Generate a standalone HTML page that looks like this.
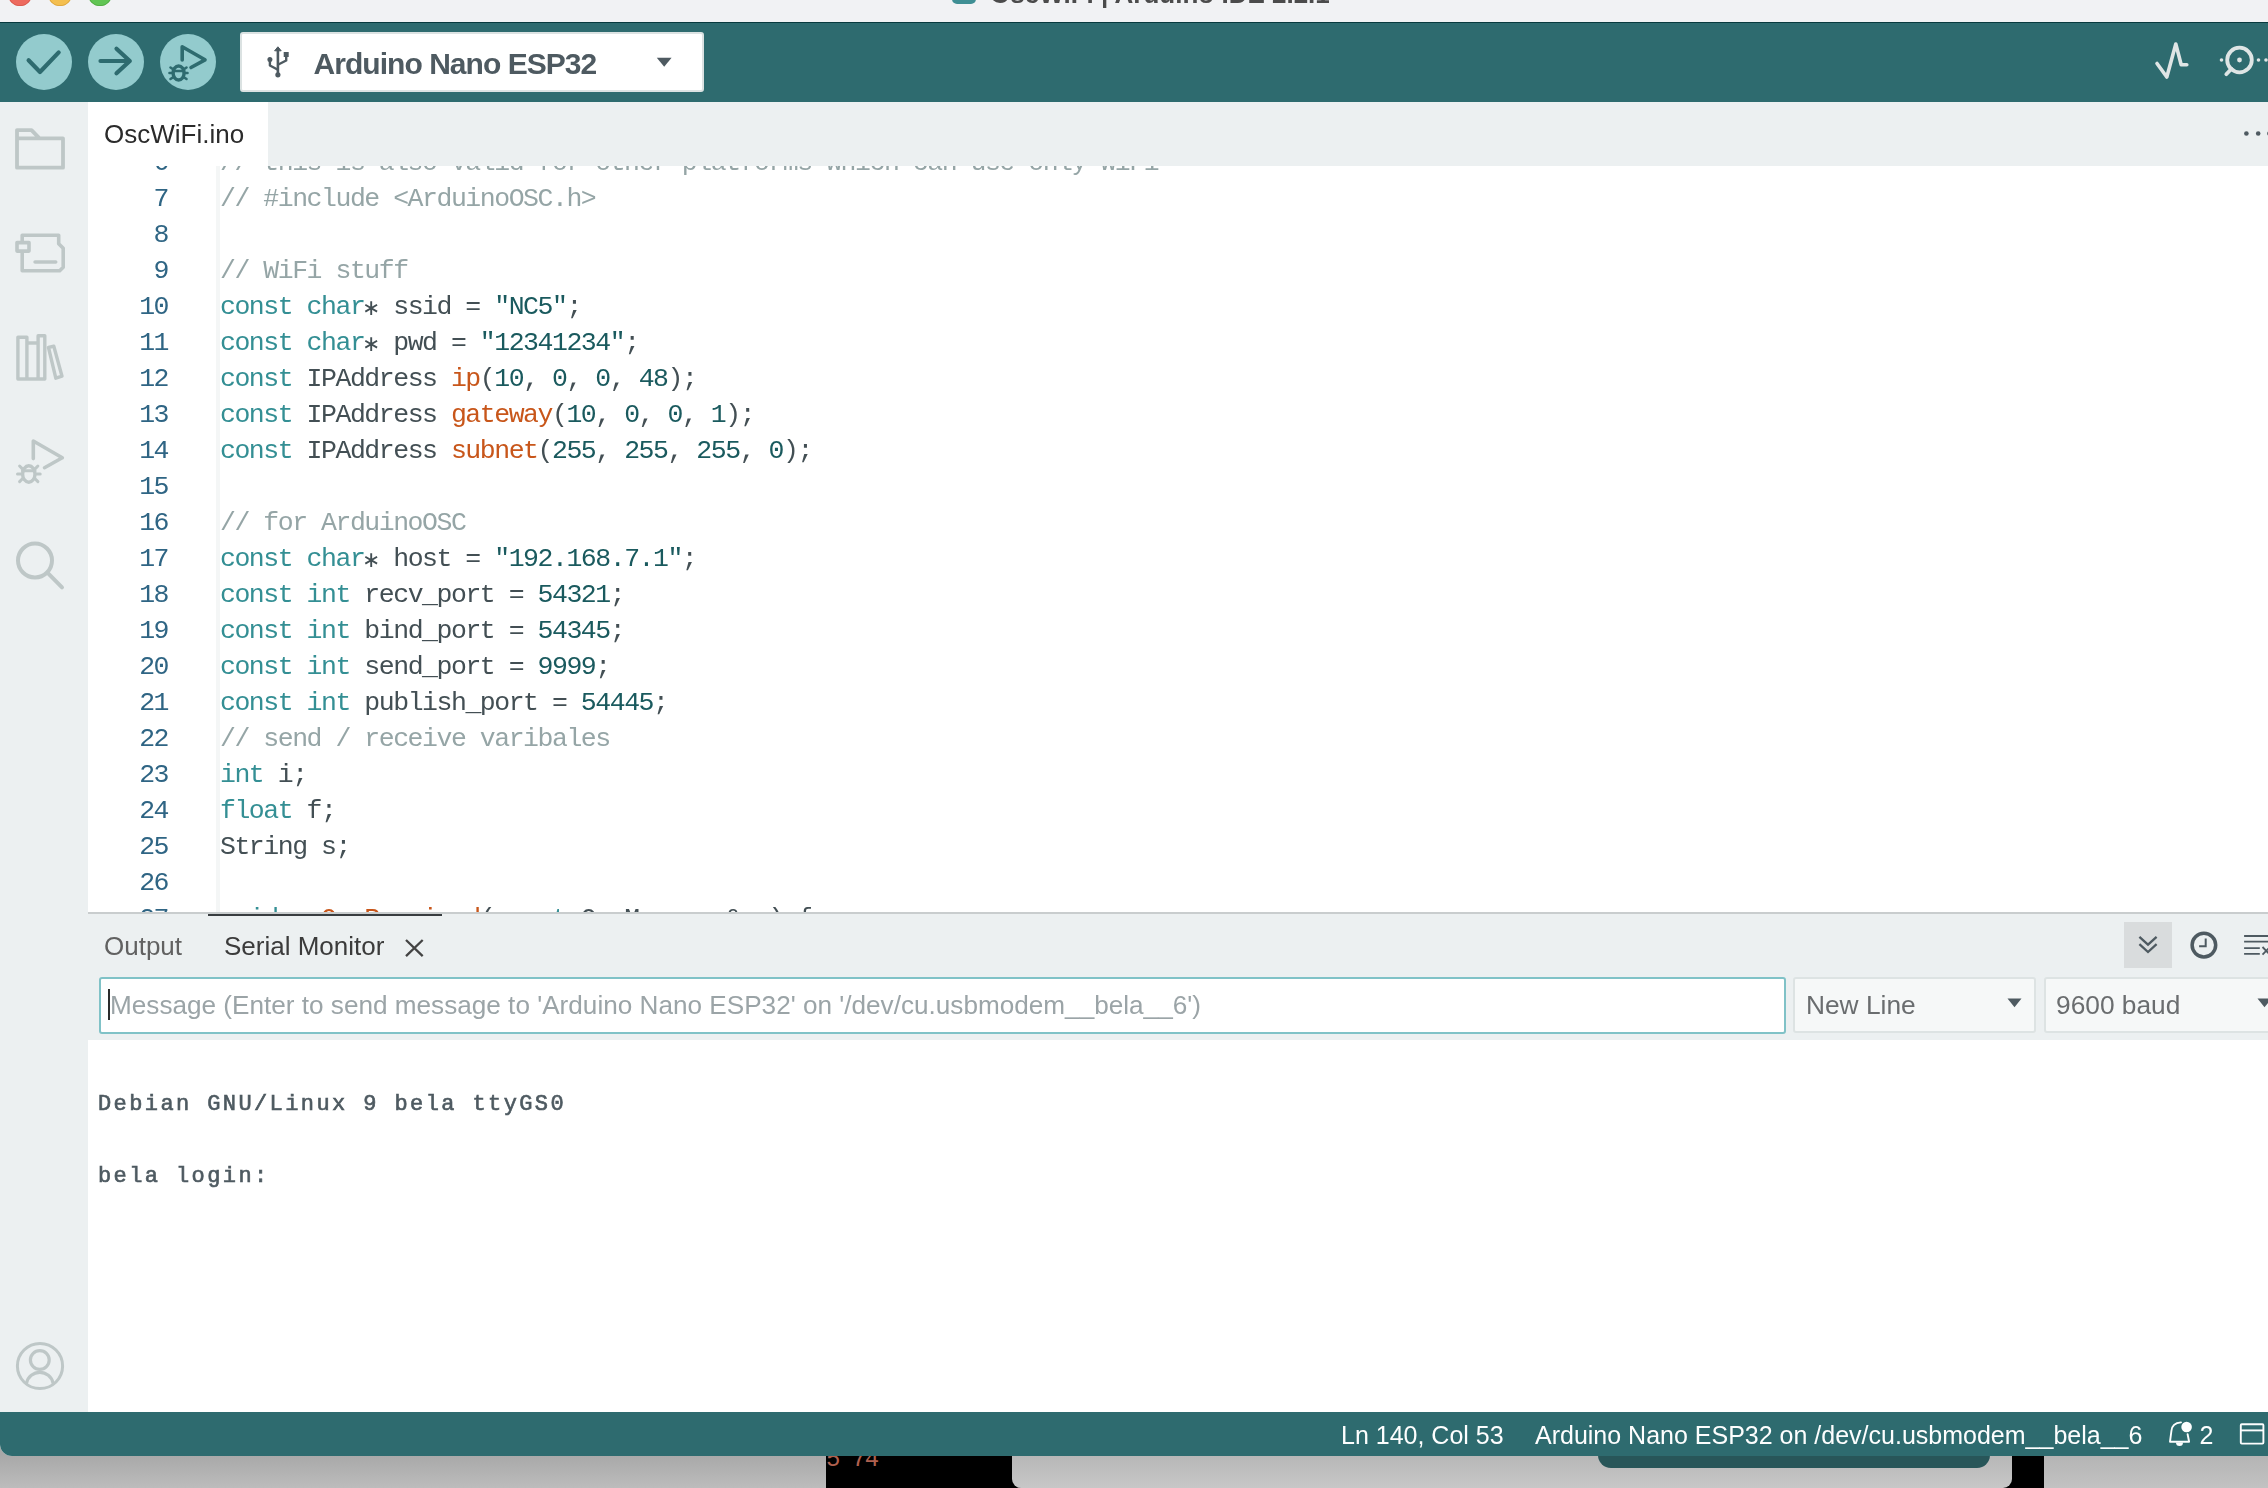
<!DOCTYPE html>
<html><head><meta charset="utf-8">
<style>
*{margin:0;padding:0;box-sizing:border-box}
html,body{width:2268px;height:1488px;overflow:hidden;background:#b4b4b4;font-family:"Liberation Sans",sans-serif}
.a{position:absolute}
#desk{left:0;top:1440px;width:2268px;height:48px;background:linear-gradient(#a8a8a8 30%,#bcbcbc)}
#win{will-change:transform;left:0;top:0;width:2268px;height:1456px;background:#fff;border-bottom-left-radius:12px;overflow:hidden}
#title{left:0;top:0;width:2268px;height:22px;background:#f1f2f4;overflow:hidden}
#tb{left:0;top:22px;width:2268px;height:80px;background:#2e6b6f;border-top:1.5px solid #083a3e}
#side{left:0;top:102px;width:88px;height:1310px;background:#ecf0f1}
#tabs{left:88px;top:102px;width:2180px;height:64px;background:#ecf0f1}
#editor{left:88px;top:166px;width:2180px;height:746px;background:#fff;overflow:hidden}
.code{font-family:"Liberation Mono",monospace;font-size:26.5px;line-height:36px;letter-spacing:-1.47px;white-space:pre}
.ln{position:absolute;left:0;width:80px;text-align:right;color:#2f6584}
.cl{position:absolute;left:132px;color:#434f54}
.ast{display:inline-block;width:14.43px;height:36px;vertical-align:top}.ast svg{display:block}.cm{color:#95a5a6}.kw{color:#348f94}.fn{color:#c8561a}.st{color:#1a5a5e}
#panel{left:88px;top:912px;width:2180px;height:500px;background:#fff}
.mono2{font-family:"Liberation Mono",monospace;font-size:22px;line-height:36px;letter-spacing:2.4px;white-space:pre;-webkit-text-stroke:0.65px #4e5a61}
#status{left:0;top:1412px;width:2268px;height:44px;background:#2e6b6f;color:#fdfefe;font-size:25px}
</style></head><body>
<div id="desk" class="a">
  <div class="a" style="left:826px;top:0;width:200px;height:48px;background:#000;overflow:hidden">
    <div class="a" style="left:0px;top:8px;font-family:'Liberation Mono',monospace;font-size:24px;line-height:24px;letter-spacing:-1.5px;color:#b0604f;white-space:pre">5 74</div>
  </div>
  <div class="a" style="left:2000px;top:0;width:44px;height:48px;background:#000"></div>
  <div class="a" style="left:1012px;top:0;width:1000px;height:48px;background:linear-gradient(#afafaf,#c7c7c7);border-radius:0 0 9px 9px"></div>
  <div class="a" style="left:1598px;top:0;width:392px;height:27.8px;background:#285659;border-radius:0 0 13px 13px"></div>
  <div class="a" style="left:2044px;top:0;width:224px;height:48px;background:linear-gradient(#aeaeae,#c2c2c2)"></div>
</div>
<div id="win" class="a">
  <div id="title" class="a">
    <div class="a" style="left:8px;top:-18px;width:24px;height:24px;border-radius:50%;background:#ed6a5e;box-shadow:inset 0 0 0 0.7px #d65549"></div>
    <div class="a" style="left:48px;top:-18px;width:24px;height:24px;border-radius:50%;background:#f4bf4f;box-shadow:inset 0 0 0 0.7px #d9a23a"></div>
    <div class="a" style="left:88px;top:-18px;width:24px;height:24px;border-radius:50%;background:#61c554;box-shadow:inset 0 0 0 0.7px #4ea83f"></div>
    <div class="a" style="left:952px;top:-20px;width:24px;height:24px;border-radius:5px;background:#3f8f94"></div>
    <div class="a" style="left:990px;top:-21.5px;font-weight:bold;font-size:26px;line-height:30px;color:#4b4b4b;white-space:nowrap">OscWiFi | Arduino IDE 2.2.1</div>
  </div>
  <div id="tb" class="a">
    <svg class="a" style="left:0;top:-23.5px" width="2268" height="102" viewBox="0 0 2268 102">
      <g transform="translate(0,0)">
      <circle cx="44" cy="62" r="28" fill="#93cbcd"/>
      <circle cx="116" cy="62" r="28" fill="#93cbcd"/>
      <circle cx="188" cy="62" r="28" fill="#93cbcd"/>
      <path d="M28.6 60.3 L40 72 L58.7 52.4" fill="none" stroke="#2e6b6f" stroke-width="4.2" stroke-linecap="round" stroke-linejoin="round"/>
      <path d="M100.5 61 H129.5 M116.5 48.7 L129.8 61 L116.5 73.3" fill="none" stroke="#2e6b6f" stroke-width="4.2" stroke-linecap="round" stroke-linejoin="round"/>
      <path d="M182.2 60 V46.8 L205 59.8 L191 67.5" fill="none" stroke="#2e6b6f" stroke-width="3.6" stroke-linecap="round" stroke-linejoin="round"/>
      <ellipse cx="178.6" cy="73" rx="5.5" ry="7" fill="none" stroke="#2e6b6f" stroke-width="3.4"/>
      <path d="M170.5 67.5 L173.5 69.5 M186.5 67.5 L183.5 69.5 M169.5 73 H173 M187.5 73 H184 M170.5 79 L173.5 77 M186.5 79 L183.5 77 M173.5 71 H183.5" fill="none" stroke="#2e6b6f" stroke-width="2.6" stroke-linecap="round"/>
      </g>
      <path d="M2157 63.5 L2166.8 77 L2175.8 44 L2181.2 64.8 H2186.8" fill="none" stroke="#dfe5e5" stroke-width="3.6" stroke-linecap="round" stroke-linejoin="round"/>
      <circle cx="2239.5" cy="60" r="12.3" fill="none" stroke="#dfe5e5" stroke-width="3.8"/>
      <circle cx="2239.5" cy="60" r="2.4" fill="#dfe5e5"/>
      <path d="M2231.5 68.8 L2226.3 74.2" stroke="#dfe5e5" stroke-width="3.8" stroke-linecap="round"/>
      <circle cx="2221.5" cy="60" r="1.8" fill="#dfe5e5"/>
      <circle cx="2258.5" cy="60" r="1.8" fill="#dfe5e5"/>
      <circle cx="2266" cy="60" r="1.8" fill="#dfe5e5"/>
    </svg>
    <div class="a" style="left:240px;top:9px;width:464px;height:60px;background:#fff;border:2px solid #dbe2e2;border-radius:3px"></div>
    <svg class="a" style="left:0;top:-23.5px" width="720" height="102" viewBox="0 0 720 102">
      <path d="M277.9 75 V48" stroke="#4e5a61" stroke-width="2.6"/>
      <path d="M274.6 50.8 L277.9 46.8 L281.2 50.8 Z" fill="#4e5a61" stroke="#4e5a61" stroke-width="1" stroke-linejoin="round"/>
      <circle cx="277.9" cy="74.8" r="2.6" fill="#4e5a61"/>
      <circle cx="269.9" cy="59.5" r="2.5" fill="#4e5a61"/>
      <rect x="283.7" y="52" width="5" height="5" fill="#4e5a61"/>
      <path d="M269.9 60 V65.5 L277.9 69.8 M286.2 56 V60.5 L277.9 64.8" fill="none" stroke="#4e5a61" stroke-width="2.4" stroke-linejoin="round"/>
      <path d="M656.8 57.8 H671.6 L664.2 66.8 Z" fill="#4e5a61"/>
    </svg>
    <div class="a" style="left:313.5px;top:26px;font-weight:bold;font-size:30px;letter-spacing:-0.96px;line-height:30px;color:#4e5a61;white-space:nowrap">Arduino Nano ESP32</div>
  </div>
  <div id="side" class="a">
    <svg class="a" style="left:0;top:0" width="88" height="1310" viewBox="0 102 88 1310">
      <g fill="none" stroke="#bec7c7" stroke-width="3.8" stroke-linejoin="round" stroke-linecap="round">
        <path d="M17 167.7 V130.1 H31.5 L39.5 138.4 H63 V167.7 Z M17 138.4 H39.5"/>
        <path d="M22.2 242.6 V235.3 H58.7 V243.8 L63.2 248.3 V267.2 L59.7 270.7 H22.2 V251.1 M17 242.6 H29 V251.1 H17 Z M35.1 262 H55.7" stroke-width="3.6"/>
        <path d="M17.9 379 V337.3 H26.9 V379 M26.9 343 H38.1 M38.1 379 V335.8 H44.8 V379 H17.9 M48.5 347.5 L53.8 346.2 L62 376.2 L55.8 378.2 Z" stroke-width="3.4"/>
        <path d="M33.3 458.6 V441 L62.3 457.8 L44.5 467.7" stroke-width="3.6"/>
        <ellipse cx="28.8" cy="474" rx="6.2" ry="8.2" stroke-width="3.4"/>
        <path d="M22.5 470.8 H35 M17.5 474 H22 M35.5 474 H40.2 M19.6 466 L22.2 468.6 M37.9 466 L35.3 468.6 M19.6 481.6 L22.2 479 M37.9 481.6 L35.3 479" stroke-width="3"/>
        <circle cx="35" cy="560.5" r="17" stroke-width="4"/>
        <path d="M48.4 573.7 L62 587.4" stroke-width="4"/>
        <circle cx="40" cy="1366" r="22.6" stroke-width="3"/>
        <circle cx="39.8" cy="1360" r="9.4" stroke-width="3.2"/>
        <path d="M26.6 1383 A13.5 13.5 0 0 1 53 1383" stroke-width="3.2"/>
      </g>
    </svg>
  </div>
  <div id="tabs" class="a">
    <div class="a" style="left:0;top:0;width:180px;height:64px;background:#fff"></div>
    <div class="a" style="left:16px;top:16px;font-size:26px;line-height:32px;color:#2b2b2b;white-space:nowrap">OscWiFi.ino</div>
    <svg class="a" style="left:2140px;top:0" width="40" height="64"><g fill="#4e5a61"><circle cx="18.4" cy="31.5" r="2.3"/><circle cx="30.2" cy="31.5" r="2.3"/><circle cx="41.5" cy="31.5" r="2.3"/></g></svg>
  </div>
  <div id="editor" class="a code">
    <div class="a" style="left:128px;top:0;width:4px;height:746px;background:#f4f6f6"></div>
    <div class="ln" style="top:-21px">6</div><div class="cl" style="top:-21px"><span class="cm">// this is also valid for other platforms which can use only WiFi</span></div>
    <div class="ln" style="top:15px">7</div><div class="cl" style="top:15px"><span class="cm">// #include &lt;ArduinoOSC.h&gt;</span></div>
    <div class="ln" style="top:51px">8</div><div class="cl" style="top:51px"></div>
    <div class="ln" style="top:87px">9</div><div class="cl" style="top:87px"><span class="cm">// WiFi stuff</span></div>
    <div class="ln" style="top:123px">10</div><div class="cl" style="top:123px"><span class="kw">const</span> <span class="kw">char</span><span class="ast"><svg width="14.43" height="36" viewBox="0 0 14.43 36"><path d="M7.2 12.3 V26.1 M1.3 15.8 L13.1 22.6 M13.1 15.8 L1.3 22.6" stroke="#434f54" stroke-width="1.9"/></svg></span> ssid = <span class="st">"NC5"</span>;</div>
    <div class="ln" style="top:159px">11</div><div class="cl" style="top:159px"><span class="kw">const</span> <span class="kw">char</span><span class="ast"><svg width="14.43" height="36" viewBox="0 0 14.43 36"><path d="M7.2 12.3 V26.1 M1.3 15.8 L13.1 22.6 M13.1 15.8 L1.3 22.6" stroke="#434f54" stroke-width="1.9"/></svg></span> pwd = <span class="st">"12341234"</span>;</div>
    <div class="ln" style="top:195px">12</div><div class="cl" style="top:195px"><span class="kw">const</span> IPAddress <span class="fn">ip</span>(<span class="st">10</span>, <span class="st">0</span>, <span class="st">0</span>, <span class="st">48</span>);</div>
    <div class="ln" style="top:231px">13</div><div class="cl" style="top:231px"><span class="kw">const</span> IPAddress <span class="fn">gateway</span>(<span class="st">10</span>, <span class="st">0</span>, <span class="st">0</span>, <span class="st">1</span>);</div>
    <div class="ln" style="top:267px">14</div><div class="cl" style="top:267px"><span class="kw">const</span> IPAddress <span class="fn">subnet</span>(<span class="st">255</span>, <span class="st">255</span>, <span class="st">255</span>, <span class="st">0</span>);</div>
    <div class="ln" style="top:303px">15</div><div class="cl" style="top:303px"></div>
    <div class="ln" style="top:339px">16</div><div class="cl" style="top:339px"><span class="cm">// for ArduinoOSC</span></div>
    <div class="ln" style="top:375px">17</div><div class="cl" style="top:375px"><span class="kw">const</span> <span class="kw">char</span><span class="ast"><svg width="14.43" height="36" viewBox="0 0 14.43 36"><path d="M7.2 12.3 V26.1 M1.3 15.8 L13.1 22.6 M13.1 15.8 L1.3 22.6" stroke="#434f54" stroke-width="1.9"/></svg></span> host = <span class="st">"192.168.7.1"</span>;</div>
    <div class="ln" style="top:411px">18</div><div class="cl" style="top:411px"><span class="kw">const</span> <span class="kw">int</span> recv_port = <span class="st">54321</span>;</div>
    <div class="ln" style="top:447px">19</div><div class="cl" style="top:447px"><span class="kw">const</span> <span class="kw">int</span> bind_port = <span class="st">54345</span>;</div>
    <div class="ln" style="top:483px">20</div><div class="cl" style="top:483px"><span class="kw">const</span> <span class="kw">int</span> send_port = <span class="st">9999</span>;</div>
    <div class="ln" style="top:519px">21</div><div class="cl" style="top:519px"><span class="kw">const</span> <span class="kw">int</span> publish_port = <span class="st">54445</span>;</div>
    <div class="ln" style="top:555px">22</div><div class="cl" style="top:555px"><span class="cm">// send / receive varibales</span></div>
    <div class="ln" style="top:591px">23</div><div class="cl" style="top:591px"><span class="kw">int</span> i;</div>
    <div class="ln" style="top:627px">24</div><div class="cl" style="top:627px"><span class="kw">float</span> f;</div>
    <div class="ln" style="top:663px">25</div><div class="cl" style="top:663px">String s;</div>
    <div class="ln" style="top:699px">26</div><div class="cl" style="top:699px"></div>
    <div class="ln" style="top:735px">27</div><div class="cl" style="top:735px"><span class="kw">void</span> <span class="fn">onOscReceived</span>(<span class="kw">const</span> OscMessage&amp; m) {</div>
  </div>
  <div id="panel" class="a">
    <div class="a" style="left:0;top:0;width:2180px;height:128px;background:#ecf0f1"></div>
    <div class="a" style="left:0;top:0;width:2180px;height:2px;background:#c9cdce"></div>
    <div class="a" style="left:120px;top:2px;width:234px;height:2.4px;background:#383d40"></div>
    <div class="a" style="left:16px;top:18px;font-size:26px;line-height:32px;color:#616161;white-space:nowrap">Output</div>
    <div class="a" style="left:136px;top:18px;font-size:26px;line-height:32px;color:#3b3b3b;white-space:nowrap">Serial Monitor</div>
    <svg class="a" style="left:310px;top:20px" width="30" height="40" viewBox="310 20 30 40"><path d="M318 28 L334.7 44.1 M334.7 28 L318 44.1" stroke="#444" stroke-width="2.3"/></svg>
    <div class="a" style="left:2036px;top:10px;width:48px;height:46px;background:#d9dcdd"></div>
    <svg class="a" style="left:2036px;top:10px" width="144" height="46" viewBox="2124 922 144 46">
      <path d="M2139.4 936.8 L2148 944.6 L2156.6 936.8 M2139.4 944.2 L2148 952 L2156.6 944.2" fill="none" stroke="#4e5a61" stroke-width="2.3"/>
      <circle cx="2203.9" cy="945.1" r="11.8" fill="none" stroke="#4e5a61" stroke-width="3.5"/>
      <path d="M2205.7 938.6 V946.2 H2199.1" fill="none" stroke="#4e5a61" stroke-width="2"/>
      <path d="M2244.1 936 H2270 M2244.1 941.6 H2270 M2244.1 948.2 H2259.8 M2244.1 953.9 H2259.8 M2262.5 947 L2270 954.7 M2270 947 L2262.5 954.7" fill="none" stroke="#4e5a61" stroke-width="1.8"/>
    </svg>
    <div class="a" style="left:10.5px;top:64.5px;width:1687.5px;height:57px;background:#fff;border:2px solid #80c2c7;border-radius:3px"></div>
    <div class="a" style="left:20px;top:77px;width:2.2px;height:31px;background:#2c2c2c"></div>
    <div class="a" style="left:22px;top:77px;font-size:26.15px;line-height:32px;color:#9ba4a7;white-space:nowrap">Message (Enter to send message to 'Arduino Nano ESP32' on '/dev/cu.usbmodem__bela__6')</div>
    <div class="a" style="left:1704.5px;top:65px;width:243px;height:56px;background:#f6f8f8;border:2px solid #dde3e3;border-radius:3px"></div>
    <div class="a" style="left:1718px;top:77px;font-size:26.3px;line-height:32px;color:#6a6d6f;white-space:nowrap">New Line</div>
    <svg class="a" style="left:1919px;top:86px" width="16" height="10"><path d="M0.5 0.5 H14.5 L7.5 9.3 Z" fill="#4e5a61"/></svg>
    <div class="a" style="left:1955.5px;top:65px;width:260px;height:56px;background:#f6f8f8;border:2px solid #dde3e3;border-radius:3px"></div>
    <div class="a" style="left:1968px;top:77px;font-size:26.3px;line-height:32px;color:#6a6d6f;white-space:nowrap">9600 baud</div>
    <svg class="a" style="left:2169px;top:86px" width="16" height="10"><path d="M0.5 0.5 H14.5 L7.5 9.3 Z" fill="#4e5a61"/></svg>
    <div class="a mono2" style="left:10px;top:175px;color:#4e5a61">Debian GNU/Linux 9 bela ttyGS0</div>
    <div class="a mono2" style="left:10px;top:247px;color:#4e5a61">bela login:</div>
  </div>
  <div id="status" class="a">
    <div class="a" style="left:1341px;top:8px;line-height:30px;white-space:nowrap">Ln 140, Col 53</div>
    <div class="a" style="left:1535px;top:8px;line-height:30px;white-space:nowrap">Arduino Nano ESP32 on /dev/cu.usbmodem__bela__6</div>
    <svg class="a" style="left:2160px;top:0" width="108" height="44" viewBox="2160 1412 108 44">
      <path d="M2170 1441.7 L2171.4 1431 Q2172 1423 2181 1422.4 M2187.6 1434.2 L2189.1 1441.7 H2170" fill="none" stroke="#fdfefe" stroke-width="1.9" stroke-linecap="round" stroke-linejoin="round"/>
      <path d="M2176 1442.4 A3.5 3.5 0 0 0 2183 1442.4 Z" fill="#fdfefe"/>
      <circle cx="2186.6" cy="1427" r="5.3" fill="#fdfefe"/>
      <rect x="2240.8" y="1424.2" width="22.6" height="19.4" rx="1" fill="none" stroke="#fdfefe" stroke-width="1.9"/>
      <path d="M2240.8 1430.4 H2263.4" stroke="#fdfefe" stroke-width="1.9"/>
    </svg>
    <div class="a" style="left:2199.5px;top:8px;line-height:30px;white-space:nowrap">2</div>
  </div>
</div>
</body></html>
